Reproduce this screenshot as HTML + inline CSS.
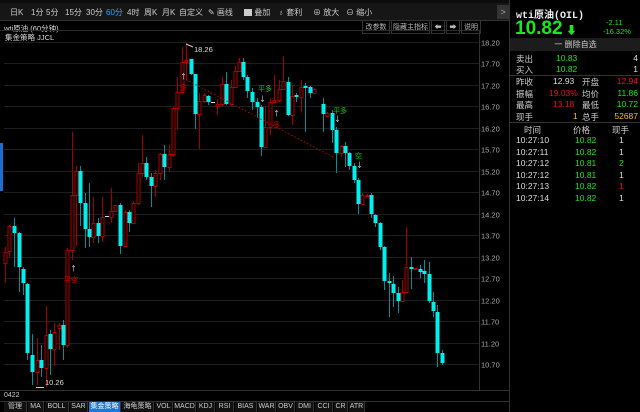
<!DOCTYPE html><html><head><meta charset="utf-8"><style>
*{margin:0;padding:0;box-sizing:border-box}
body{width:640px;height:412px;background:#000;overflow:hidden;font-family:"Liberation Sans","Noto Sans CJK SC",sans-serif;color:#ccc;font-size:8px;position:relative}
.abs{position:absolute;white-space:nowrap}
#tb{left:0;top:0;width:509px;height:21px;background:#161616;border-top:3px solid #0c0c0c;border-bottom:1px solid #333}
#tb span{position:absolute;top:4px;font-size:8px;color:#ccc}
#rp{left:509px;top:0;width:131px;height:412px;background:#000;border-left:1px solid #333}
.row{position:absolute;left:6px;width:122px;height:11px;font-size:8.5px}
.row span{position:absolute;top:0}
.g{color:#1ee61e}.r{color:#e8101a}.w{color:#ddd}.y{color:#f0c020}
.tab{position:absolute;top:402px;height:10px;font-size:7px;color:#ccc;border-right:1px solid #333;text-align:center;line-height:10px;background:#111}
</style></head><body>
<div id="tb" class="abs">
<span style="left:10px">日K</span><span style="left:31px">1分</span><span style="left:46px">5分</span><span style="left:65px">15分</span><span style="left:86px">30分</span><span style="left:106px;color:#2aa8ff">60分</span><span style="left:127px">4时</span><span style="left:144px">周K</span><span style="left:162px">月K</span><span style="left:179px">自定义</span><span style="left:208px">✎ 画线</span><span style="left:244px">▇ 叠加</span><span style="left:278px">♁ 套利</span><span style="left:313px">⊕ 放大</span><span style="left:346px">⊖ 缩小</span>
<div class="abs" style="left:497px;top:2px;width:12px;height:14px;background:#333;color:#aaa;font-size:9px;text-align:center;line-height:14px">&gt;</div>
</div>
<div class="abs" style="left:4px;top:23px;font-size:7.5px;color:#ddd">wti原油 (60分钟)</div>
<div class="abs" style="left:0;top:30px;width:480px;height:1px;background:#2a2a2a"></div>
<div class="abs" style="left:5px;top:32px;font-size:7.5px;color:#ddd">集金策略 JJCL</div>
<div class="abs" style="left:362px;top:20px;height:11px;font-size:7px;color:#bbb">
<span style="position:absolute;left:0;width:28px;border:1px solid #333;text-align:center;padding:1px 0">改参数</span><span style="position:absolute;left:29px;width:39px;border:1px solid #333;text-align:center;padding:1px 0">隐藏主指标</span><span style="position:absolute;left:69px;width:14px;border:1px solid #333;text-align:center;padding:1px 0">⬅</span><span style="position:absolute;left:84px;width:14px;border:1px solid #333;text-align:center;padding:1px 0">➡</span><span style="position:absolute;left:99px;width:20px;border:1px solid #333;text-align:center;padding:1px 0">说明</span></div>
<div class="abs" style="left:0;top:143px;width:3px;height:48px;background:#1a6fd0"></div>
<svg class="abs" style="left:0;top:0" width="509" height="412" id="ch"></svg>
<div class="abs" style="left:0;top:390px;width:509px;height:1px;background:#333"></div>
<div class="abs" style="left:4px;top:392px;font-size:7px;color:#ccc">0422</div>
<div class="abs" style="left:0;top:401px;width:509px;height:1px;background:#333"></div>
<div id="tabs"></div>
<div id="rp" class="abs">
<div class="abs" style="left:6px;top:6px;font-family:'Liberation Mono','Noto Sans CJK SC',monospace;font-size:10px;color:#eee;font-weight:bold">wti原油(OIL)</div>
<div class="abs g" style="left:5px;top:18px;font-size:19px;font-weight:bold">10.82</div>
<div class="abs g" style="left:56px;top:22px;font-size:11px">⬇</div>
<div class="abs g" style="left:96px;top:18px;font-size:7.5px">-2.11</div>
<div class="abs g" style="left:93px;top:27px;font-size:7.5px">-16.32%</div>
<div class="abs" style="left:0;top:38px;width:131px;height:13px;background:#1c1c1c;text-align:center;font-size:8px;color:#ccc;line-height:13px">一 删除自选</div>
<div class="row" style="top:53px"><span>卖出</span><span class="g" style="left:40px">10.83</span><span style="right:0" class="w">4</span></div>
<div class="row" style="top:64px"><span>买入</span><span class="g" style="left:40px">10.82</span><span style="right:0" class="w">1</span></div>
<div class="abs" style="left:0;top:75px;width:131px;height:1px;background:#333"></div>
<div class="row" style="top:76px"><span>昨收</span><span class="w" style="left:37px">12.93</span><span style="left:66px">开盘</span><span class="r" style="right:0">12.94</span></div>
<div class="row" style="top:88px"><span>振幅</span><span class="r" style="left:33px">19.03%</span><span style="left:66px">均价</span><span class="g" style="right:0">11.86</span></div>
<div class="row" style="top:99px"><span>最高</span><span class="r" style="left:37px">13.18</span><span style="left:66px">最低</span><span class="g" style="right:0">10.72</span></div>
<div class="row" style="top:111px"><span>现手</span><span class="y" style="left:57px">1</span><span style="left:66px">总手</span><span class="y" style="right:0">52687</span></div>
<div class="abs" style="left:0;top:122px;width:131px;height:1px;background:#333"></div>
<div class="row" style="top:124px"><span style="left:8px">时间</span><span style="left:57px">价格</span><span style="left:96px">现手</span></div>
<div id="ticks"></div>
</div>
<script>
var s='',S=document.getElementById('ch');
function Y(p){return 42+(18.2-p)*42.93}
for(var i=0;i<16;i++){var p=18.2-i*0.5,y=Math.round(Y(p))+.5;s+='<line x1="4" x2="479" y1="'+y+'" y2="'+y+'" stroke="#1e1e1e"/>';s+='<text x="481" y="'+(y+3)+'" fill="#aaa" font-size="7.5" font-family="Liberation Sans">'+p.toFixed(2)+'</text>'}
s+='<line x1="479.5" x2="479.5" y1="31" y2="390" stroke="#333"/>';
var d=[[5,'r',252,263,247,283],[9,'r',226,251,225,257],[14,'c',226,233,218,267],[19,'c',233,267,232,292],[23,'c',269,283,267,295],[27,'c',284,353,283,360],[32,'c',355,372,334,385],[37,'r',360,372,338,385],[41,'c',360,368,345,377],[46,'r',335,368,306,387],[50,'c',334,349,330,375],[54,'r',332,349,323,366],[59,'r',325,328,323,350],[63,'c',325,345,320,360],[67,'r',250,345,248,348],[72,'r',195,250,132,260],[76,'r',171,195,166,246],[80,'c',171,203,166,226],[85,'c',203,229,193,248],[89,'c',229,237,183,247],[93,'r',223,237,197,243],[98,'c',223,236,218,243],[102,'r',217,236,197,242],[107,'d',216,216,216,216],[111,'r',211,217,188,223],[115,'r',205,211,205,212],[120,'c',205,246,203,254],[125,'r',212,246,210,247],[129,'c',212,223,210,232],[133,'r',203,223,201,223],[138,'r',173,203,163,205],[142,'r',163,173,135,177],[146,'c',163,177,157,180],[151,'c',177,186,173,207],[155,'r',173,186,170,197],[160,'r',154,173,153,180],[164,'c',154,167,145,180],[169,'r',154,167,145,172],[173,'r',108,154,107,157],[177,'r',92,108,77,130],[182,'r',62,92,47,92],[186,'r',60,62,43,80],[191,'c',59,74,59,75],[195,'c',74,114,74,129],[199,'r',101,114,93,149],[204,'r',95,101,93,103],[208,'c',96,102,95,105],[213,'d',102,102,102,102],[217,'r',104,106,99,115],[222,'r',84,104,77,106],[226,'c',84,104,72,105],[231,'r',87,104,80,106],[235,'r',71,87,66,88],[239,'r',62,71,58,72],[243,'c',62,77,58,80],[247,'c',77,91,75,98],[252,'c',92,102,88,110],[257,'c',102,107,98,118],[261,'c',107,147,105,156],[265,'r',127,147,107,148],[270,'r',102,127,98,135],[274,'r',100,102,75,103],[279,'r',89,100,80,102],[283,'r',81,89,56,90],[288,'c',82,115,77,116],[292,'r',96,115,85,125],[296,'c',95,97,93,102],[301,'r',87,97,80,112],[305,'c',86,88,83,132],[310,'c',87,93,86,98],[314,'r',89,93,88,94],[323,'c',104,114,98,132],[327,'r',113,116,112,117],[332,'c',113,130,110,143],[336,'c',130,153,127,173],[341,'r',146,153,145,157],[345,'c',146,153,142,167],[349,'c',153,166,152,170],[354,'c',166,180,163,183],[358,'c',180,204,178,214],[362,'r',195,204,193,205],[367,'r',195,196,194,196],[371,'c',195,214,193,218],[375,'c',215,223,214,227],[380,'c',223,247,222,250],[384,'c',247,281,246,290],[389,'c',281,283,273,317],[393,'c',284,293,276,307],[398,'c',293,301,287,313],[402,'r',292,301,280,302],[406,'r',267,292,227,293],[411,'c',267,269,257,289],[415,'r',268,269,268,269],[420,'c',269,272,265,278],[424,'c',271,274,260,283],[429,'c',274,301,262,303],[433,'c',302,311,292,317],[437,'c',312,353,305,367],[442,'c',353,363,350,365]];
d.forEach(function(c){var x=c[0],t=c[2],b=c[3];
if(c[1]=='d'){s+='<line x1="'+(x-2)+'" x2="'+(x+2)+'" y1="'+t+'.5" y2="'+t+'.5" stroke="#ddd"/>';return}
var col=c[1]=='r'?'#b00000':'#00f0f0';
s+='<line x1="'+(x+.5)+'" x2="'+(x+.5)+'" y1="'+c[4]+'" y2="'+c[5]+'" stroke="'+(c[1]=='r'?'#a00000':'#008f96')+'"/>';
if(b-t<1)b=t+1;
if(c[1]=='r')s+='<rect x="'+(x-1)+'" y="'+t+'.5" width="3" height="'+(b-t)+'" fill="#000" stroke="'+col+'"/>';
else s+='<rect x="'+(x-1.5)+'" y="'+t+'" width="4" height="'+(b-t)+'" fill="'+col+'"/>';});
s+='<line x1="183" y1="78" x2="333" y2="157" stroke="#c00000" stroke-dasharray="1.5,2"/>';
s+='<polyline points="186,44 193,47" stroke="#ccc" fill="none"/><text x="194" y="52" fill="#ddd" font-size="7.5">18.26</text>';
s+='<line x1="36" x2="44" y1="387.5" y2="387.5" stroke="#ccc"/><text x="45" y="385" fill="#ddd" font-size="7.5">10.26</text>';
function T(x,y,t,c){s+='<text x="'+x+'" y="'+y+'" fill="'+c+'" font-size="7" font-family="Noto Sans CJK SC">'+t+'</text>'}
T(70,271,'↑','#ddd');T(64,282,'平空','#d00');T(180,79,'↑','#ddd');T(180,90,'多','#d00');
T(258,91,'平多','#1c1');T(259,101,'↓','#ddd');T(273,116,'↑','#ddd');T(273,127,'多','#d00');
T(333,113,'平多','#1c1');T(334,121,'↓','#ddd');T(355,158,'空','#1c1');T(356,167,'↓','#ddd');
S.innerHTML=s;
var tabs=[['管理',23],['MA',16],['BOLL',24],['SAR',18],['集金策略',32],['海龟策略',32],['VOL',18],['MACD',22],['KDJ',18],['RSI',18],['BIAS',22],['WAR',18],['OBV',18],['DMI',18],['CCI',18],['CR',14],['ATR',16]],h='',x=4;
tabs.forEach(function(t,i){h+='<div class="tab" style="left:'+x+'px;width:'+t[1]+'px;'+(i==4?'background:#1c78d4;color:#fff':'')+'">'+t[0]+'</div>';x+=t[1]+1});
document.getElementById('tabs').innerHTML=h;
var tk=[['10:27:10','10.82','1','w'],['10:27:11','10.82','1','w'],['10:27:12','10.81','2','g'],['10:27:12','10.81','1','w'],['10:27:13','10.82','1','r'],['10:27:14','10.82','1','w']],k='';
tk.forEach(function(r,i){k+='<div class="row" style="top:'+(135+i*11.6)+'px"><span class="w">'+r[0]+'</span><span class="g" style="left:59px">'+r[1]+'</span><span class="'+r[3]+'" style="left:103px">'+r[2]+'</span></div>'});
document.getElementById('ticks').innerHTML=k;
</script>
</body></html>
